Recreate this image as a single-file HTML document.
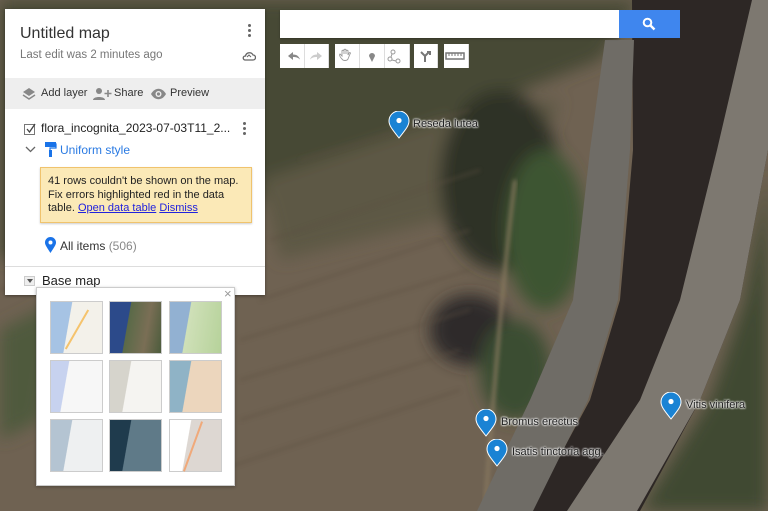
<!DOCTYPE html>
<html><head><meta charset="utf-8"><style>
*{box-sizing:border-box;margin:0;padding:0}
body{width:768px;height:511px;overflow:hidden;position:relative;font-family:"Liberation Sans",Arial,sans-serif;background:#6e6150}
.abs{position:absolute}
.panel{left:5px;top:9px;width:260px;height:286px;background:#fff;box-shadow:0 1px 3px rgba(0,0,0,.4)}
.t{position:absolute;white-space:nowrap}
.btn{position:absolute;top:44px;height:24px;background:#fff;border-right:1px solid #ddd}
.thumb{position:absolute;width:53px;height:53px;border:1px solid #ccc}
.pin{position:absolute;width:22px;height:28px}
.lbl{position:absolute;font-size:11px;color:#222;text-shadow:0 0 2px #fff,0 0 2px #fff,0 0 2px #fff}
</style></head><body>
<svg class="abs" style="left:0;top:0" width="768" height="511">
<defs><filter id="b"><feGaussianBlur stdDeviation="8"/></filter><filter id="s"><feGaussianBlur stdDeviation="2"/></filter></defs>
<rect width="768" height="511" fill="#6f6252"/>
<g filter="url(#b)">
<polygon points="0,0 640,0 600,60 470,110 260,200 0,260" fill="#464a35"/>
<polygon points="260,180 470,110 560,100 520,200 280,260" fill="#5d5844"/>
<polygon points="0,330 60,300 40,420 0,440" fill="#4f5a3c"/>
<ellipse cx="500" cy="180" rx="60" ry="90" fill="#2e3028"/>
<ellipse cx="545" cy="230" rx="40" ry="80" fill="#3d5533"/>
<ellipse cx="470" cy="330" rx="40" ry="35" fill="#2e2c2a"/>
<ellipse cx="515" cy="370" rx="35" ry="50" fill="#3a4e32"/>
<polygon points="768,170 768,511 640,511 710,400 745,300" fill="#3f4a33"/>
</g>
<g stroke="#5c4f40" stroke-width="2" opacity=".6" filter="url(#s)">
<line x1="260" y1="300" x2="470" y2="230"/><line x1="240" y1="340" x2="470" y2="270"/><line x1="240" y1="380" x2="470" y2="310"/><line x1="240" y1="420" x2="460" y2="350"/><line x1="220" y1="470" x2="460" y2="390"/><line x1="0" y1="290" x2="260" y2="210"/><line x1="270" y1="240" x2="480" y2="170"/><line x1="300" y1="160" x2="470" y2="110"/>
</g>
<path d="M515 180 Q500 300 485 511" stroke="#8a7a60" stroke-width="3" fill="none" filter="url(#s)"/>
<polygon points="632,0 768,0 768,150 740,300 700,400 640,511 530,511 590,400 620,300 633,150" fill="#2d2725"/>
<polygon points="605,40 634,40 630,150 618,300 588,400 533,511 477,511 530,400 573,300 590,150" fill="#6f6c66"/>
<polygon points="752,0 768,0 768,150 740,300 700,400 637,511 567,511 640,400 680,300 717,150" fill="#7d7870"/>
</svg>

<div class="abs panel">
<div class="t" style="left:15px;top:16px;font-size:16px;color:#333">Untitled map</div>
<div class="t" style="left:15px;top:40px;font-size:11.5px;color:#777">Last edit was 2 minutes ago</div>
<div class="t" style="left:243px;top:15px;width:4px;"><div style="width:3px;height:3px;background:#666;border-radius:50%;margin-bottom:2px"></div><div style="width:3px;height:3px;background:#666;border-radius:50%;margin-bottom:2px"></div><div style="width:3px;height:3px;background:#666;border-radius:50%"></div></div>
<svg class="abs" style="left:237px;top:41px" width="14" height="11"><path d="M3 10h8a2.5 2.5 0 0 0 0-5 4 4 0 0 0-7.5 1A2 2 0 0 0 3 10z" fill="none" stroke="#666" stroke-width="1.3"/><path d="M5 7l2-2 2 2" fill="none" stroke="#666"/></svg>
<div class="abs" style="left:0;top:69px;width:260px;height:31px;background:#eee"></div>
<svg class="abs" style="left:17px;top:78px" width="14" height="13"><path d="M7 1L1 5l6 4 6-4z" fill="#888"/><path d="M1 8l6 4 6-4" fill="none" stroke="#888" stroke-width="1.5"/></svg>
<div class="t" style="left:36px;top:78px;font-size:11px;color:#333">Add layer</div>
<svg class="abs" style="left:88px;top:78px" width="20" height="13"><circle cx="6" cy="4" r="3" fill="#888"/><path d="M0 13c0-4 12-4 12 0z" fill="#888"/><path d="M15 3v7M11.5 6.5h7" stroke="#888" stroke-width="1.6"/></svg>
<div class="t" style="left:109px;top:78px;font-size:11px;color:#333">Share</div>
<svg class="abs" style="left:145px;top:79px" width="17" height="12"><path d="M1 6c4-7 11-7 15 0-4 7-11 7-15 0z" fill="#888"/><circle cx="8.5" cy="6" r="3" fill="#eee"/><circle cx="8.5" cy="6" r="1.6" fill="#888"/></svg>
<div class="t" style="left:165px;top:78px;font-size:11px;color:#333">Preview</div>
<div class="abs" style="left:19px;top:115px;width:11px;height:11px;border:1px solid #777"></div>
<svg class="abs" style="left:20px;top:114px" width="11" height="11"><path d="M2 6l2.5 3L10 1" fill="none" stroke="#444" stroke-width="1.3"/></svg>
<div class="t" style="left:36px;top:112px;font-size:12px;color:#222">flora_incognita_2023-07-03T11_2...</div>
<div class="t" style="left:238px;top:113px"><div style="width:3px;height:3px;background:#666;border-radius:50%;margin-bottom:2px"></div><div style="width:3px;height:3px;background:#666;border-radius:50%;margin-bottom:2px"></div><div style="width:3px;height:3px;background:#666;border-radius:50%"></div></div>
<svg class="abs" style="left:20px;top:137px" width="11" height="8"><path d="M1 1l4.5 4.5L10 1" fill="none" stroke="#666" stroke-width="1.3"/></svg>
<svg class="abs" style="left:40px;top:133px" width="12" height="16"><rect x="0" y="0" width="11" height="5" fill="#1a73e8"/><path d="M10 2h1v4H5v3" fill="none" stroke="#1a73e8" stroke-width="1.2"/><rect x="4" y="8" width="3" height="7" fill="#1a73e8"/></svg>
<div class="t" style="left:55px;top:134px;font-size:12px;color:#2a7ae2">Uniform style</div>
<div class="abs" style="left:35px;top:158px;width:212px;height:56px;background:#fbe9b7;border:1px solid #f0c36d;box-shadow:0 1px 2px rgba(0,0,0,.2);font-size:11px;line-height:13.5px;color:#222;padding:7px 2px 0 7px">41 rows couldn't be shown on the map. Fix errors highlighted red in the data table. <span style="color:#2222dd;text-decoration:underline">Open data table</span> <span style="color:#2222dd;text-decoration:underline">Dismiss</span></div>
<svg class="abs" style="left:40px;top:228px" width="11" height="17"><path d="M5.5 16C1 9 0 7.5 0 5.5a5.5 5.5 0 0 1 11 0c0 2-1 3.5-5.5 10.5z" fill="#1a73e8"/><circle cx="5.5" cy="5.5" r="2" fill="#fff"/></svg>
<div class="t" style="left:55px;top:230px;font-size:12px;color:#333">All items <span style="color:#888">(506)</span></div>
<div class="abs" style="left:0;top:257px;width:260px;height:1px;background:#ddd"></div>
<div class="abs" style="left:19px;top:267px;width:11px;height:10px;background:#eee;border:1px solid #ccc"></div>
<svg class="abs" style="left:22px;top:270px" width="6" height="4"><path d="M0 0h6L3 4z" fill="#555"/></svg>
<div class="t" style="left:37px;top:264px;font-size:13px;color:#222">Base map</div>
</div>

<div class="abs" style="left:36px;top:287px;width:199px;height:199px;background:#fff;border:1px solid #ccc;box-shadow:0 1px 3px rgba(0,0,0,.3)">
<div class="t" style="left:187px;top:-2px;font-size:13px;color:#999">×</div>
<div class="thumb" style="left:13px;top:13px;background:linear-gradient(100deg,#a6c3e4 0 35%,#f3f1ea 36%);"><div style="position:absolute;left:25px;top:5px;width:2px;height:45px;background:#f5c36c;transform:rotate(30deg)"></div></div>
<div class="thumb" style="left:72px;top:13px;background:linear-gradient(100deg,#2c4a8a 0 35%,#5a6a48 36%,#7a6e55 70%,#4c5c3c)"></div>
<div class="thumb" style="left:132px;top:13px;background:linear-gradient(100deg,#92b1d2 0 35%,#cfe0b8 36%,#b6d29a)"></div>
<div class="thumb" style="left:13px;top:72px;background:linear-gradient(100deg,#c7d2ef 0 30%,#f7f7f7 31%)"></div>
<div class="thumb" style="left:72px;top:72px;background:linear-gradient(100deg,#d6d4cc 0 35%,#f5f4f1 36%)"></div>
<div class="thumb" style="left:132px;top:72px;background:linear-gradient(100deg,#8fb3c6 0 35%,#ecd6bd 36%)"></div>
<div class="thumb" style="left:13px;top:131px;background:linear-gradient(100deg,#b4c4d2 0 35%,#eef0f1 36%)"></div>
<div class="thumb" style="left:72px;top:131px;background:linear-gradient(100deg,#1f3b4d 0 35%,#5f7a88 36%)"></div>
<div class="thumb" style="left:132px;top:131px;background:linear-gradient(100deg,#ffffff 0 35%,#ddd7d2 36%)"><div style="position:absolute;left:22px;top:0;width:2px;height:53px;background:#f0a97a;transform:rotate(20deg)"></div></div>
</div>

<div class="abs" style="left:280px;top:10px;width:339px;height:28px;background:#fff;box-shadow:0 1px 2px rgba(0,0,0,.3)"></div>
<div class="abs" style="left:619px;top:10px;width:61px;height:28px;background:#3f86ee"></div>
<svg class="abs" style="left:642px;top:17px" width="14" height="14"><circle cx="5.5" cy="5.5" r="3.8" fill="none" stroke="#fff" stroke-width="2"/><path d="M8.5 8.5l4 4" stroke="#fff" stroke-width="2.4"/></svg>

<div class="btn" style="left:280px;width:25px"></div>
<div class="btn" style="left:305px;width:24px"></div>
<div class="btn" style="left:335px;width:25px"></div>
<div class="btn" style="left:360px;width:25px"></div>
<div class="btn" style="left:385px;width:25px"></div>
<div class="btn" style="left:414px;width:24px"></div>
<div class="btn" style="left:444px;width:25px"></div>
<svg class="abs" style="left:280px;top:44px" width="190" height="24">
<path d="M8 12l5-4v2.5c4 0 6 2 7 5-2-2-4-2.5-7-2.5V16z" fill="#888"/>
<path d="M42 12l-5-4v2.5c-4 0-6 2-7 5 2-2 4-2.5 7-2.5V16z" fill="#ccc"/>
<path d="M62 15c-2-2-3-4-2-5l2 2V7c0-1 2-1 2 0v3V6c0-1 2-1 2 0v4V7c0-1 2-1 2 0v4l1-2c1-1 2 0 1 1l-2 5c-1 2-5 2-6 0z" fill="none" stroke="#999" stroke-width=".9"/>
<path d="M92 18l-3-6a3 3 0 1 1 6 0z" fill="#888"/>
<circle cx="113" cy="8" r="2" fill="none" stroke="#999"/><circle cx="110" cy="15" r="2" fill="none" stroke="#999"/><circle cx="118" cy="17" r="2" fill="none" stroke="#999"/><path d="M112 10l-1 3M112 16l4 1" stroke="#999"/>
<path d="M145 18v-6l-4-4M145 12l4-4M147 8h3v3" fill="none" stroke="#777" stroke-width="2"/>
<rect x="166" y="9" width="18" height="6" fill="none" stroke="#777" stroke-width="1.5"/><path d="M169 9v3M172 9v3M175 9v3M178 9v3M181 9v3" stroke="#777"/>
</svg>

<svg class="pin" style="left:388px;top:111px" viewBox="0 0 22 28"><path d="M11 27C3 17 1 14 1 10a10 10 0 0 1 20 0c0 4-2 7-10 17z" fill="#1a83d4" stroke="#fff" stroke-width="1"/><circle cx="11" cy="9.5" r="2.6" fill="#fff"/></svg>
<div class="lbl" style="left:413px;top:118px">Reseda lutea</div>
<svg class="pin" style="left:475px;top:409px" viewBox="0 0 22 28"><path d="M11 27C3 17 1 14 1 10a10 10 0 0 1 20 0c0 4-2 7-10 17z" fill="#1a83d4" stroke="#fff" stroke-width="1"/><circle cx="11" cy="9.5" r="2.6" fill="#fff"/></svg>
<div class="lbl" style="left:501px;top:416px">Bromus erectus</div>
<svg class="pin" style="left:486px;top:439px" viewBox="0 0 22 28"><path d="M11 27C3 17 1 14 1 10a10 10 0 0 1 20 0c0 4-2 7-10 17z" fill="#1a83d4" stroke="#fff" stroke-width="1"/><circle cx="11" cy="9.5" r="2.6" fill="#fff"/></svg>
<div class="lbl" style="left:512px;top:446px">Isatis tinctoria agg.</div>
<svg class="pin" style="left:660px;top:392px" viewBox="0 0 22 28"><path d="M11 27C3 17 1 14 1 10a10 10 0 0 1 20 0c0 4-2 7-10 17z" fill="#1a83d4" stroke="#fff" stroke-width="1"/><circle cx="11" cy="9.5" r="2.6" fill="#fff"/></svg>
<div class="lbl" style="left:686px;top:399px">Vitis vinifera</div>
</body></html>
